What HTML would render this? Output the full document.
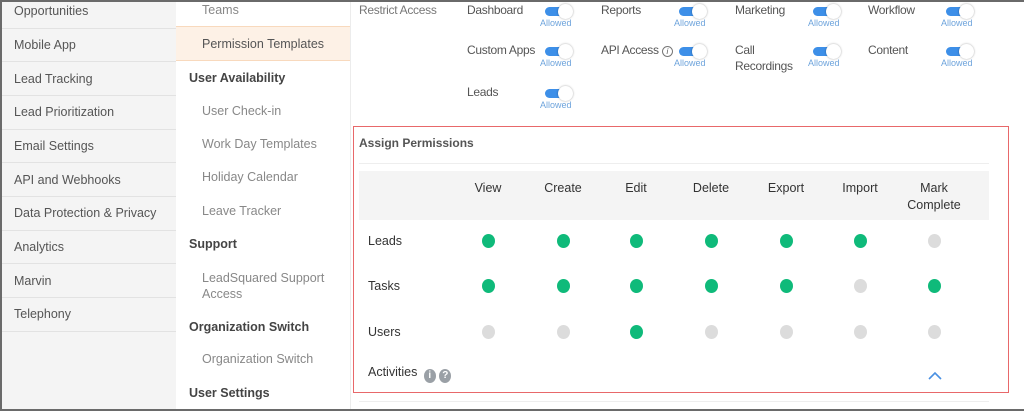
<!DOCTYPE html>
<html><head><style>
*{margin:0;padding:0;box-sizing:border-box}
body{width:1024px;height:411px;overflow:hidden;background:#fff;font-family:"Liberation Sans",sans-serif;position:relative}
.a{position:absolute;white-space:nowrap}
.frame{position:absolute;left:0;top:0;width:1024px;height:411px;border:2px solid #6a6a6a;border-right:none;pointer-events:none}
.side{position:absolute;left:0;top:0;width:176px;height:411px;background:#f4f4f4}
.si{position:absolute;left:14px;font-size:12.5px;color:#555}
.sl{position:absolute;left:0;width:176px;height:1px;background:#e2e2e2}
.mi{position:absolute;left:202px;font-size:12.5px;color:#888}
.mh{position:absolute;left:189px;font-size:12.5px;color:#444;font-weight:bold}
.lbl{position:absolute;font-size:12px;letter-spacing:-0.3px;color:#555;line-height:16px}
.tg{position:absolute;width:28px;height:16px}
.tg .tr{position:absolute;left:0;top:4px;width:22px;height:9px;border-radius:5px;background:#3d8fe8}
.tg .kn{position:absolute;left:13px;top:1px;width:15px;height:15px;border-radius:50%;background:#fff;box-shadow:0 0 2px rgba(0,0,0,.35)}
.al{position:absolute;font-size:9px;color:#6ea4dc}
.ch{position:absolute;top:180px;font-size:12.5px;color:#333;text-align:center;width:70px;line-height:17px}
.rl{position:absolute;left:368px;font-size:12.5px;color:#333}
.d{position:absolute;width:13px;height:14px;border-radius:50%}
.g{background:#0fba7a}.n{background:#dcdcdc}
.ic{display:inline-block;width:12px;height:14px;border-radius:50%;background:#9aa0a6;color:#fff;font-size:10px;font-weight:bold;text-align:center;line-height:14px;vertical-align:-2px}
</style></head><body>
<div class="side"></div>
<div class="si" style="top:4px">Opportunities</div>
<div class="sl" style="top:28px"></div>
<div class="si" style="top:38px">Mobile App</div>
<div class="sl" style="top:61px"></div>
<div class="si" style="top:72px">Lead Tracking</div>
<div class="sl" style="top:95px"></div>
<div class="si" style="top:105px">Lead Prioritization</div>
<div class="sl" style="top:129px"></div>
<div class="si" style="top:139px">Email Settings</div>
<div class="sl" style="top:162px"></div>
<div class="si" style="top:173px">API and Webhooks</div>
<div class="sl" style="top:196px"></div>
<div class="si" style="top:206px">Data Protection &amp; Privacy</div>
<div class="sl" style="top:230px"></div>
<div class="si" style="top:240px">Analytics</div>
<div class="sl" style="top:263px"></div>
<div class="si" style="top:274px">Marvin</div>
<div class="sl" style="top:297px"></div>
<div class="si" style="top:307px">Telephony</div>
<div class="sl" style="top:331px"></div>

<div class="a" style="left:176px;top:26px;width:174px;height:35px;background:#fdf1e6;border-top:1px solid #f8d9bd;border-bottom:1px solid #f8d9bd"></div>
<div class="a" style="left:350px;top:0;width:1px;height:411px;background:#ececec"></div>
<div class="mi" style="top:3px">Teams</div>
<div class="mi" style="top:37px;color:#555">Permission Templates</div>
<div class="mh" style="top:71px">User Availability</div>
<div class="mi" style="top:104px">User Check-in</div>
<div class="mi" style="top:137px">Work Day Templates</div>
<div class="mi" style="top:170px">Holiday Calendar</div>
<div class="mi" style="top:204px">Leave Tracker</div>
<div class="mh" style="top:237px">Support</div>
<div class="mi" style="top:270px;line-height:16px;white-space:normal;width:140px">LeadSquared Support Access</div>
<div class="mh" style="top:320px">Organization Switch</div>
<div class="mi" style="top:352px">Organization Switch</div>
<div class="mh" style="top:386px">User Settings</div>

<div class="lbl" style="left:359px;top:2px;color:#777">Restrict Access</div>
<div class="lbl" style="left:467px;top:2px">Dashboard</div>
<div class="lbl" style="left:601px;top:2px">Reports</div>
<div class="lbl" style="left:735px;top:2px">Marketing</div>
<div class="lbl" style="left:868px;top:2px">Workflow</div>
<div class="lbl" style="left:467px;top:42px">Custom Apps</div>
<div class="lbl" style="left:601px;top:42px">API Access <span style="display:inline-block;width:11px;height:11px;border:1px solid #777;border-radius:50%;font-size:8px;line-height:9px;text-align:center;font-style:italic;vertical-align:0px">i</span></div>
<div class="lbl" style="left:735px;top:42px">Call<br>Recordings</div>
<div class="lbl" style="left:868px;top:42px">Content</div>
<div class="lbl" style="left:467px;top:84px">Leads</div>

<div class="tg" style="left:545px;top:3px"><div class="tr"></div><div class="kn"></div></div><div class="al" style="left:540px;top:18px">Allowed</div>
<div class="tg" style="left:679px;top:3px"><div class="tr"></div><div class="kn"></div></div><div class="al" style="left:674px;top:18px">Allowed</div>
<div class="tg" style="left:813px;top:3px"><div class="tr"></div><div class="kn"></div></div><div class="al" style="left:808px;top:18px">Allowed</div>
<div class="tg" style="left:946px;top:3px"><div class="tr"></div><div class="kn"></div></div><div class="al" style="left:941px;top:18px">Allowed</div>
<div class="tg" style="left:545px;top:43px"><div class="tr"></div><div class="kn"></div></div><div class="al" style="left:540px;top:58px">Allowed</div>
<div class="tg" style="left:679px;top:43px"><div class="tr"></div><div class="kn"></div></div><div class="al" style="left:674px;top:58px">Allowed</div>
<div class="tg" style="left:813px;top:43px"><div class="tr"></div><div class="kn"></div></div><div class="al" style="left:808px;top:58px">Allowed</div>
<div class="tg" style="left:946px;top:43px"><div class="tr"></div><div class="kn"></div></div><div class="al" style="left:941px;top:58px">Allowed</div>
<div class="tg" style="left:545px;top:85px"><div class="tr"></div><div class="kn"></div></div><div class="al" style="left:540px;top:100px">Allowed</div>

<div class="a" style="left:353px;top:126px;width:656px;height:267px;border:1.5px solid #e8686a"></div>
<div class="a" style="left:359px;top:136px;font-size:12px;color:#555;font-weight:bold">Assign Permissions</div>
<div class="a" style="left:359px;top:163px;width:630px;height:1px;background:#eee"></div>
<div class="a" style="left:359px;top:171px;width:630px;height:49px;background:#f4f4f4"></div>
<div class="ch" style="left:453px">View</div>
<div class="ch" style="left:528px">Create</div>
<div class="ch" style="left:601px">Edit</div>
<div class="ch" style="left:676px">Delete</div>
<div class="ch" style="left:751px">Export</div>
<div class="ch" style="left:825px">Import</div>
<div class="ch" style="left:899px">Mark<br>Complete</div>

<div class="rl" style="top:234px">Leads</div>
<div class="rl" style="top:279px">Tasks</div>
<div class="rl" style="top:325px">Users</div>
<div class="rl" style="top:365px">Activities <span class="ic" style="margin-left:3px">i</span> <span class="ic">?</span></div>

<div class="d g" style="left:482px;top:234px"></div><div class="d g" style="left:557px;top:234px"></div><div class="d g" style="left:630px;top:234px"></div><div class="d g" style="left:705px;top:234px"></div><div class="d g" style="left:780px;top:234px"></div><div class="d g" style="left:854px;top:234px"></div><div class="d n" style="left:928px;top:234px"></div>
<div class="d g" style="left:482px;top:279px"></div><div class="d g" style="left:557px;top:279px"></div><div class="d g" style="left:630px;top:279px"></div><div class="d g" style="left:705px;top:279px"></div><div class="d g" style="left:780px;top:279px"></div><div class="d n" style="left:854px;top:279px"></div><div class="d g" style="left:928px;top:279px"></div>
<div class="d n" style="left:482px;top:325px"></div><div class="d n" style="left:557px;top:325px"></div><div class="d g" style="left:630px;top:325px"></div><div class="d n" style="left:705px;top:325px"></div><div class="d n" style="left:780px;top:325px"></div><div class="d n" style="left:854px;top:325px"></div><div class="d n" style="left:928px;top:325px"></div>

<svg class="a" style="left:927px;top:371px" width="16" height="10"><path d="M2 8 L8 2 L14 8" fill="none" stroke="#4a90e2" stroke-width="1.6"/></svg>
<div class="a" style="left:359px;top:401px;width:630px;height:1px;background:#eee"></div>
<div class="frame"></div>
</body></html>
